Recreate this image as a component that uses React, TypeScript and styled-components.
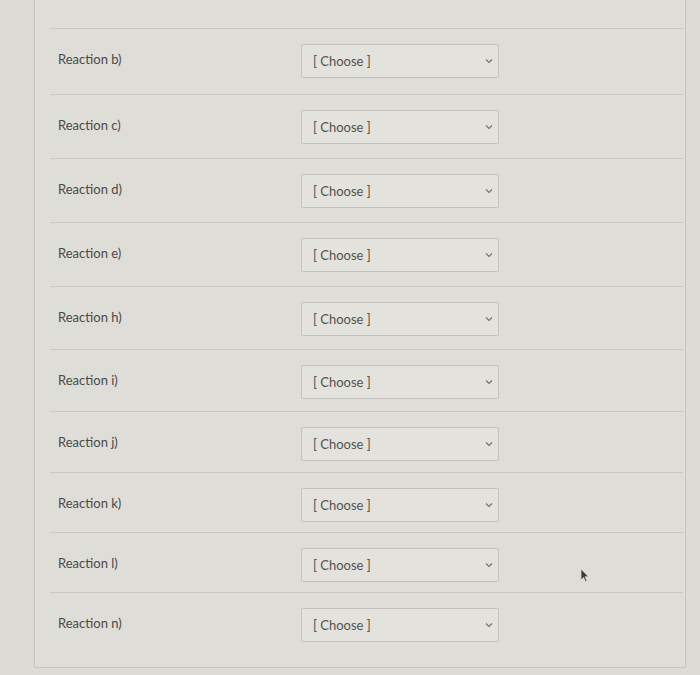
import React from "react";
import styled, { createGlobalStyle } from "styled-components";

const Global = createGlobalStyle`
  html, body { margin: 0; padding: 0; }
  body {
    background: #dcdbd6;
    font-family: Lato, "Open Sans", "Liberation Sans", sans-serif;
    width: 700px;
    height: 675px;
    overflow: hidden;
  }
`;

const Page = styled.div`
  position: relative;
  width: 700px;
  height: 675px;
  padding: 28px 14px 0 34px;
  box-sizing: border-box;
`;

const Panel = styled.div`
  position: relative;
  border: 1px solid #c4c3be;
  border-top: none;
  margin-top: -28px;
  padding: 28px 2px 0 15px;
  height: 668px;
  box-sizing: border-box;
  background: #dedDd8;
`;

const Row = styled.div<{ $h: number }>`
  display: grid;
  grid-template-columns: 251px 198px;
  align-items: start;
  height: ${(p) => p.$h}px;
  border-top: 1px solid #c8c7c2;
  padding-top: 15px;
  box-sizing: border-box;
`;

const Label = styled.div`
  padding: 7px 0 0 8px;
  font-size: 13px;
  line-height: 16px;
  color: #4a4a48;
`;

const Select = styled.div`
  height: 34px;
  box-sizing: border-box;
  border: 1px solid #c3c2bd;
  border-radius: 2px;
  background: #e3e2dd;
  display: flex;
  align-items: center;
  justify-content: space-between;
  padding: 0 5px 0 11px;
  font-size: 13px;
  color: #52524f;
`;

const Chevron = () => (
  <svg width="8" height="6" viewBox="0 0 8 6">
    <path d="M1 1.5 L4 4.5 L7 1.5" fill="none" stroke="#70706d" strokeWidth="1.1" />
  </svg>
);

const Cursor = styled.svg`
  position: absolute;
  left: 576px;
  top: 567px;
`;

const rows: [string, number][] = [
  ["Reaction b)", 66],
  ["Reaction c)", 64],
  ["Reaction d)", 64],
  ["Reaction e)", 64],
  ["Reaction h)", 63],
  ["Reaction i)", 62],
  ["Reaction j)", 61],
  ["Reaction k)", 60],
  ["Reaction l)", 60],
  ["Reaction n)", 76],
];

export default function App() {
  return (
    <Page>
      <Global />
      <Panel>
        {rows.map(([label, h]) => (
          <Row key={label} $h={h}>
            <Label>{label}</Label>
            <Select>
              <span>[ Choose ]</span>
              <Chevron />
            </Select>
          </Row>
        ))}
      </Panel>
      <Cursor width="14" height="16" viewBox="0 0 14 16">
        <path d="M5 2 L5 13 L7.5 10.5 L9.5 14.5 L11 13.8 L9 9.8 L12.5 9.8 Z" fill="#3a3a3a" stroke="#d8d7d2" strokeWidth="0.8" />
      </Cursor>
    </Page>
  );
}
